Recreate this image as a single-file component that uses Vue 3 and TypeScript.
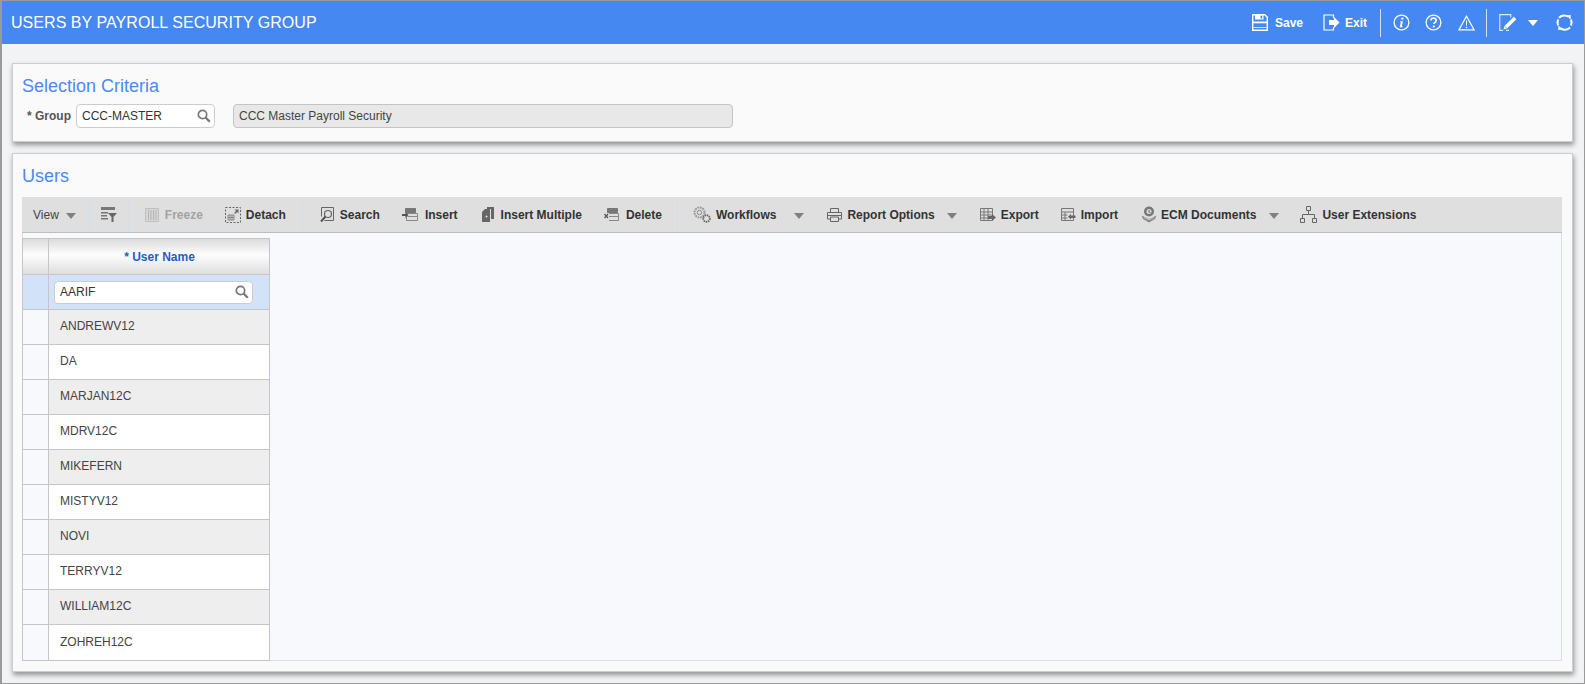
<script setup lang="ts">
interface Tool { label?: string; icon?: string; caret?: boolean; sep?: boolean; disabled?: boolean; cls?: string }
const tools: Tool[] = [
  { label: 'View', caret: true, cls: 'view' },
  { sep: true, cls: 's1' },
  { icon: 'filter', cls: 'filter' },
  { sep: true, cls: 's2' },
  { icon: 'freeze', label: 'Freeze', disabled: true, cls: 'freeze' },
  { icon: 'detach', label: 'Detach', cls: 'detach' },
  { sep: true, cls: 's3' },
  { icon: 'search', label: 'Search', cls: 'search' },
  { icon: 'insert', label: 'Insert', cls: 'insert' },
  { icon: 'multi', label: 'Insert Multiple', cls: 'multi' },
  { icon: 'delete', label: 'Delete', cls: 'delete' },
  { sep: true, cls: 's4' },
  { icon: 'gears', label: 'Workflows', caret: true, cls: 'work' },
  { icon: 'print', label: 'Report Options', caret: true, cls: 'report' },
  { icon: 'export', label: 'Export', cls: 'export' },
  { icon: 'import', label: 'Import', cls: 'import' },
  { icon: 'ecm', label: 'ECM Documents', caret: true, cls: 'ecm' },
  { icon: 'tree', label: 'User Extensions', cls: 'ext' }
]
const users = ['ANDREWV12', 'DA', 'MARJAN12C', 'MDRV12C', 'MIKEFERN', 'MISTYV12', 'NOVI', 'TERRYV12', 'WILLIAM12C', 'ZOHREH12C']
</script>

<template>
  <div class="window">
    <header class="topbar">
      <h1 class="app-title">USERS BY PAYROLL SECURITY GROUP</h1>
      <div class="top-actions">
        <button class="top-btn save">
          <svg width="16" height="17" viewBox="0 0 16 17"><path d="M.7.700h12.100l2.500 2.500v13.100H.7z" fill="none" stroke="#fff" stroke-width="1.400"/><path d="M3 1h8.500v4.500H3z" fill="#fff"/><path d="M8.500 1.700h1.800v2.800H8.500z" fill="#4688f1"/><path d="M1 7.500h14v1.800H1z" fill="#fff"/><path d="M1 13h14v1H1z" fill="#cfe0fb"/></svg>
          <span>Save</span>
        </button>
        <button class="top-btn exit">
          <svg width="17" height="17" viewBox="0 0 17 17"><path d="M10.500 4V1H1v15h9.500v-3" fill="none" stroke="#fff" stroke-width="1.200"/><path d="M6 6h5V3l5.500 5.500L11 14v-3H6z" fill="#fff"/></svg>
          <span>Exit</span>
        </button>
        <i class="top-sep s-a"></i>
        <svg class="ic info" width="17" height="17" viewBox="0 0 17 17"><circle cx="8.500" cy="8.500" r="7.400" fill="none" stroke="#fff" stroke-width="1.300"/><circle cx="9.300" cy="4.600" r="1.200" fill="#fff"/><path d="M7 7.200h3l-1.200 5h1l-.2 1H6.700l1.200-5H7z" fill="#fff"/></svg>
        <svg class="ic help" width="17" height="17" viewBox="0 0 17 17"><circle cx="8.500" cy="8.500" r="7.400" fill="none" stroke="#fff" stroke-width="1.300"/><path d="M5.900 6.400c.2-3 5.400-3 5.300 0 0 2-2.300 1.900-2.300 3.700" fill="none" stroke="#fff" stroke-width="1.700"/><circle cx="8.800" cy="12.500" r="1.100" fill="#fff"/></svg>
        <svg class="ic warn" width="17" height="16" viewBox="0 0 17 16"><path d="M8.500 1.300 16 14.800H1z" fill="none" stroke="#fff" stroke-width="1.200"/><path d="M8 5.500h1.100l-.1 5.200h-.9z" fill="#fff"/><circle cx="8.500" cy="12.500" r=".8" fill="#fff"/></svg>
        <i class="top-sep s-b"></i>
        <svg class="ic edit" width="18" height="17" viewBox="0 0 18 17"><path d="M4 .6H.8v15.800H4M.8 .6h11v3M7 16.400h3" fill="none" stroke="#dbe7fc" stroke-width="1.100"/><path d="M4.500 15.500 5.500 12 14.800 2.800l2.500 2.500-9.300 9.300z" fill="#fff"/><path d="M6 12.500l2 2" stroke="#4688f1" stroke-width=".8"/></svg>
        <i class="top-caret"></i>
        <svg class="ic refresh" width="17" height="17" viewBox="0 0 17 17"><path d="M3 3.800A7 7 0 0 1 12.500 2.800M14 13.300A7 7 0 0 1 4.200 14" fill="none" stroke="#fff" stroke-width="2"/><path d="M2.300 5.500A7 7 0 0 0 2.200 11.500M14.800 5.500a7 7 0 0 1 .1 6" fill="none" stroke="#fff" stroke-width="2"/><path d="M10.500 1.500 14.800 1l-.3 4.500zM6.500 15.500l-4.300.5.300-4.500z" fill="#fff"/></svg>
      </div>
    </header>

    <main class="content">
      <section class="panel criteria">
        <h2 class="panel-title">Selection Criteria</h2>
        <div class="criteria-row">
          <label class="field-label">* Group</label>
          <div class="lookup">
            <span>CCC-MASTER</span>
            <svg width="14" height="14" viewBox="0 0 14 14"><circle cx="5.500" cy="5.500" r="4.200" fill="none" stroke="#777" stroke-width="1.700"/><path d="M8.500 8.500l4.300 4.300" stroke="#777" stroke-width="2.300"/></svg>
          </div>
          <div class="readonly">CCC Master Payroll Security</div>
        </div>
      </section>

      <section class="panel users">
        <h2 class="panel-title">Users</h2>
        <div class="toolbar">
          <template v-for="t in tools" :key="t.cls">
            <i v-if="t.sep" class="tool-sep" :class="t.cls"></i>
            <div v-else class="tool" :class="[t.cls, { disabled: t.disabled }]">
              <svg v-if="t.icon === 'filter'" width="16" height="15" viewBox="0 0 16 15"><path d="M0 0h14v3H0zM0 5h7v1.500H0zM0 8h6v1.500H0zM0 11h7v1.500H0z" fill="#777"/><path d="M7 6h9l-3.500 4v5h-2v-5z" fill="#666"/></svg>
              <svg v-else-if="t.icon === 'freeze'" width="14" height="14" viewBox="0 0 14 14"><path d="M.5.500h13v13H.5z" fill="#d6d6d6" stroke="#c0c0c0"/><path d="M3.500 2v10M6 2v10M8.500 2v10M11 2v10" stroke="#b5b5b5"/></svg>
              <svg v-else-if="t.icon === 'detach'" width="16" height="16" viewBox="0 0 16 16"><path d="M.5.500h15v15H.5z" fill="none" stroke="#666" stroke-dasharray="2 1.500"/><path d="M3 8h6v5H3zM3 10.500h6M5 8v5M7 8v5" fill="none" stroke="#777" stroke-width=".8"/><path d="M9.500 2.500h4v4l-1.400-1.400-2 2-1-1 2-2z" fill="#666"/></svg>
              <svg v-else-if="t.icon === 'search'" width="14" height="16" viewBox="0 0 14 16"><path d="M1.500.5h12v13h-9" fill="none" stroke="#666"/><path d="M1.500.5v9" stroke="#666"/><circle cx="8" cy="7" r="3.500" fill="none" stroke="#666" stroke-width="1.200"/><path d="M5.500 9.500 1 14.500" stroke="#555" stroke-width="2"/></svg>
              <svg v-else-if="t.icon === 'insert'" width="16" height="13" viewBox="0 0 16 13"><path d="M3.500.5h10v4h-10z" fill="#777" stroke="#777"/><path d="M5.500 8.500h10M4.500 5.500h11v7h-11z" fill="none" stroke="#888"/><path d="M0 6h3.500V4l3 3-3 3V8H0z" fill="#555"/></svg>
              <svg v-else-if="t.icon === 'multi'" width="12" height="15" viewBox="0 0 12 15"><path d="M5 0h7v12H9V2H5z" fill="#666"/><path d="M3 2h5v13H0V5z" fill="#666"/><path d="M3.500 9.500h2M4.500 8.500v2" stroke="#ddd"/></svg>
              <svg v-else-if="t.icon === 'delete'" width="15" height="13" viewBox="0 0 15 13"><path d="M3.500.5h10v4h-10z" fill="#777" stroke="#777"/><path d="M5 5.500h9.500v7H5M5 8.500h9.500" fill="none" stroke="#888"/><path d="M.5 6l3.500 4M4 6 .5 10" stroke="#555" stroke-width="1.200"/></svg>
              <svg v-else-if="t.icon === 'gears'" width="18" height="17" viewBox="0 0 18 17"><circle cx="6.500" cy="6.500" r="5" fill="none" stroke="#999" stroke-width="2" stroke-dasharray="1.800 .8"/><circle cx="6.500" cy="6.500" r="2.200" fill="none" stroke="#888"/><circle cx="13.500" cy="12.500" r="3.300" fill="none" stroke="#666" stroke-width="1.800" stroke-dasharray="1.500 .7"/></svg>
              <svg v-else-if="t.icon === 'print'" width="15" height="14" viewBox="0 0 15 14"><path d="M3.500 4V.5h8V4M3 11H.5V4.500h14V11H12" fill="none" stroke="#666"/><path d="M0 7h15v1H0z" fill="#666"/><path d="M3.500 9h8v4.500h-8z" fill="none" stroke="#666"/></svg>
              <svg v-else-if="t.icon === 'export'" width="16" height="14" viewBox="0 0 16 14"><path d="M.5.500h12v12H.5zM.5 4h12M.5 7h12M.5 10h12M4 .5v12M8 .5v12" fill="none" stroke="#777"/><path d="M8 8h4V6l4 3.500-4 3.500v-2H8z" fill="#666"/></svg>
              <svg v-else-if="t.icon === 'import'" width="15" height="14" viewBox="0 0 15 14"><path d="M.5.500h12v12H.5zM.5 4h12M.5 7h6M.5 10h6M4 4v8.500" fill="none" stroke="#777"/><path d="M14.500 7.500H10V6L7 8.700l3 2.800V10h4.500z" fill="#666"/></svg>
              <svg v-else-if="t.icon === 'ecm'" width="16" height="17" viewBox="0 0 16 17"><circle cx="8" cy="5.500" r="5" fill="#777"/><circle cx="8" cy="5.500" r="2.500" fill="#ddd"/><path d="M8 4v2l1.500 1" stroke="#666" fill="none"/><path d="M.5 9.500 8 13l7.500-3.500L14 13l-6 3.500L2 13z" fill="#888"/><path d="M3 11.500l5 2.300 5-2.300" stroke="#ddd" fill="none" stroke-width=".7"/></svg>
              <svg v-else-if="t.icon === 'tree'" width="17" height="17" viewBox="0 0 17 17"><path d="M6.500.5h4v4h-4zM.5 12.500h4v4h-4zM12.500 12.500h4v4h-4zM8.500 4.500v4M2.500 12.500v-4h12v4" fill="none" stroke="#666"/></svg>
              <span v-if="t.label" class="tool-label">{{ t.label }}</span>
              <i v-if="t.caret" class="caret"></i>
            </div>
          </template>
        </div>
        <div class="grid-area">
          <div class="grid">
            <div class="row head">
              <div class="gutter"></div>
              <div class="cell">* User Name</div>
            </div>
            <div class="row filter-row">
              <div class="gutter"></div>
              <div class="cell">
                <div class="lookup in-grid">
                  <span>AARIF</span>
                  <svg width="14" height="14" viewBox="0 0 14 14"><circle cx="5.500" cy="5.500" r="4.200" fill="none" stroke="#777" stroke-width="1.700"/><path d="M8.500 8.500l4.300 4.300" stroke="#777" stroke-width="2.300"/></svg>
                </div>
              </div>
            </div>
            <div v-for="u in users" :key="u" class="row data">
              <div class="gutter"></div>
              <div class="cell">{{ u }}</div>
            </div>
          </div>
        </div>
      </section>
    </main>
  </div>
</template>

<style>
html, body { margin: 0; padding: 0; background: #f2f2f2; }
</style>

<style scoped>
* { box-sizing: border-box; }
.window {
  width: 1585px; height: 684px; display: flex; flex-direction: column;
  border: 1px solid #9a9a9a; border-left-width: 2px;
  background: #f2f3f4; font-family: "Liberation Sans", Arial, sans-serif; overflow: hidden;
}
.topbar { height: 43px; flex: none; background: #4688f1; display: flex; align-items: center; justify-content: space-between; }
.app-title { margin: 0 0 0 9px; font-size: 16px; font-weight: 400; color: #fff; letter-spacing: .05px; }
.top-actions { display: flex; align-items: center; height: 100%; padding-right: 11px; }
.top-btn { display: flex; align-items: center; gap: 7px; padding: 0; border: 0; background: none; color: #fff; font: 700 12px "Liberation Sans", Arial, sans-serif; }
.exit { margin-left: 20px; gap: 5px; }
.top-sep { width: 1px; height: 28px; background: #cfe0fb; }
.s-a { margin-left: 13px; }
.info { margin-left: 12px; }
.help { margin-left: 15px; }
.warn { margin-left: 16px; }
.s-b { margin-left: 11px; }
.edit { margin-left: 12px; }
.top-caret { width: 0; height: 0; margin-left: 11px; border: 5px solid transparent; border-top: 6px solid #fff; border-bottom: 0; }
.refresh { margin-left: 18px; }
.content { flex: 1; display: flex; flex-direction: column; gap: 11px; padding: 19px 11px 11px 10px; min-height: 0; }
.panel { background: #fafafa; border: 1px solid #cdcdcd; box-shadow: 1px 3px 5px rgba(0,0,0,.4); padding: 0 10px 0 9px; }
.criteria { height: 79px; flex: none; }
.users { height: 519px; flex: none; }
.panel-title { margin: 0; font-size: 18px; font-weight: 400; color: #4d88f5; line-height: 22px; padding-top: 11px; }
.criteria-row { display: flex; align-items: center; margin-top: 7px; }
.field-label { margin-left: 5px; width: 49px; font-size: 12px; font-weight: 700; color: #555; white-space: nowrap; }
.lookup { display: flex; align-items: center; justify-content: space-between; width: 139px; height: 24px; padding: 0 3px 0 5px; background: #fff; border: 1px solid #ccc; border-radius: 4px; font-size: 12px; color: #333; }
.readonly { width: 500px; height: 24px; margin-left: 18px; padding-left: 5px; display: flex; align-items: center; background: #e8e8e8; border: 1px solid #c4c4c4; border-radius: 4px; font-size: 12px; color: #444; }
.toolbar { height: 36px; margin-top: 10px; display: flex; align-items: center; background: #dfdfdf; border-bottom: 1px solid #bdbdbd; font-size: 12px; }
.tool { display: flex; align-items: center; flex: none; color: #333; font-weight: 700; }
.tool svg { margin-right: 6px; flex: none; }
.tool.disabled { color: #a3a3a3; }
.view { margin-left: 11px; font-weight: 400; color: #444; }
.tool-sep { width: 1px; height: 35px; background: #d6dde6; flex: none; }
.caret { width: 0; height: 0; border: 5px solid transparent; border-top: 6px solid #808080; border-bottom: 0; flex: none; margin-top: 2px; }
.view .caret { margin-left: 7px; }
.s1 { margin-left: 13px; }
.filter { margin-left: 11px; }
.s2 { margin-left: 5px; }
.freeze { margin-left: 16px; }
.detach { margin-left: 22px; }
.detach svg { margin-right: 5px; }
.s3 { margin-left: 16px; }
.search { margin-left: 17px; }
.insert { margin-left: 22px; }
.insert svg, .multi svg, .delete svg { margin-right: 7px; }
.multi { margin-left: 24px; }
.delete { margin-left: 22px; }
.s4 { margin-left: 15px; }
.work { margin-left: 15px; }
.work .caret { margin-left: 18px; }
.report .caret { margin-left: 12px; }
.ecm .caret { margin-left: 13px; }
.report { margin-left: 23px; }
.export { margin-left: 23px; }
.import { margin-left: 22px; }
.ecm { margin-left: 23px; }
.ext { margin-left: 21px; }
.work svg, .report svg, .export svg, .import svg, .ext svg { margin-right: 5px; }
.ecm svg { margin-right: 4px; }
.grid-area { height: 428px; background: #f7f9fd; border-right: 1px solid #d6dfe8; border-bottom: 1px solid #d6dfe8; border-left: 1px solid #d6dfe8; padding-top: 5px; }
.grid { width: 248px; margin-left: -1px; border-left: 1px solid #c6c6c6; border-bottom: 1px solid #c6c6c6; }
.row { display: flex; height: 35px; border-bottom: 1px solid #c6c6c6; }
.gutter { width: 26px; flex: none; background: #f7f9fd; border-right: 1px solid #c6c6c6; }
.cell { flex: 1; display: flex; align-items: center; padding-left: 11px; font-size: 12px; color: #444; border-right: 1px solid #c6c6c6; }
.data .cell { padding-bottom: 2px; }
.head { height: 37px; border-top: 1px solid #c6c6c6; background: linear-gradient(#dcdcdc, #fdfdfd 45%, #dedede); }
.head .gutter { background: transparent; }
.head .cell { justify-content: center; padding-left: 1px; font-weight: 700; color: #1a5fc8; }
.filter-row { background: #d2e2f9; }
.filter-row .gutter { background: #d2e2f9; }
.filter-row .cell { padding-left: 5px; }
.in-grid { width: 199px; height: 23px; }
.data:nth-child(odd) .cell { background: #eeeeee; }
.data:nth-child(even) .cell { background: #fff; }
.grid .row:last-child { border-bottom: 0; }
</style>
